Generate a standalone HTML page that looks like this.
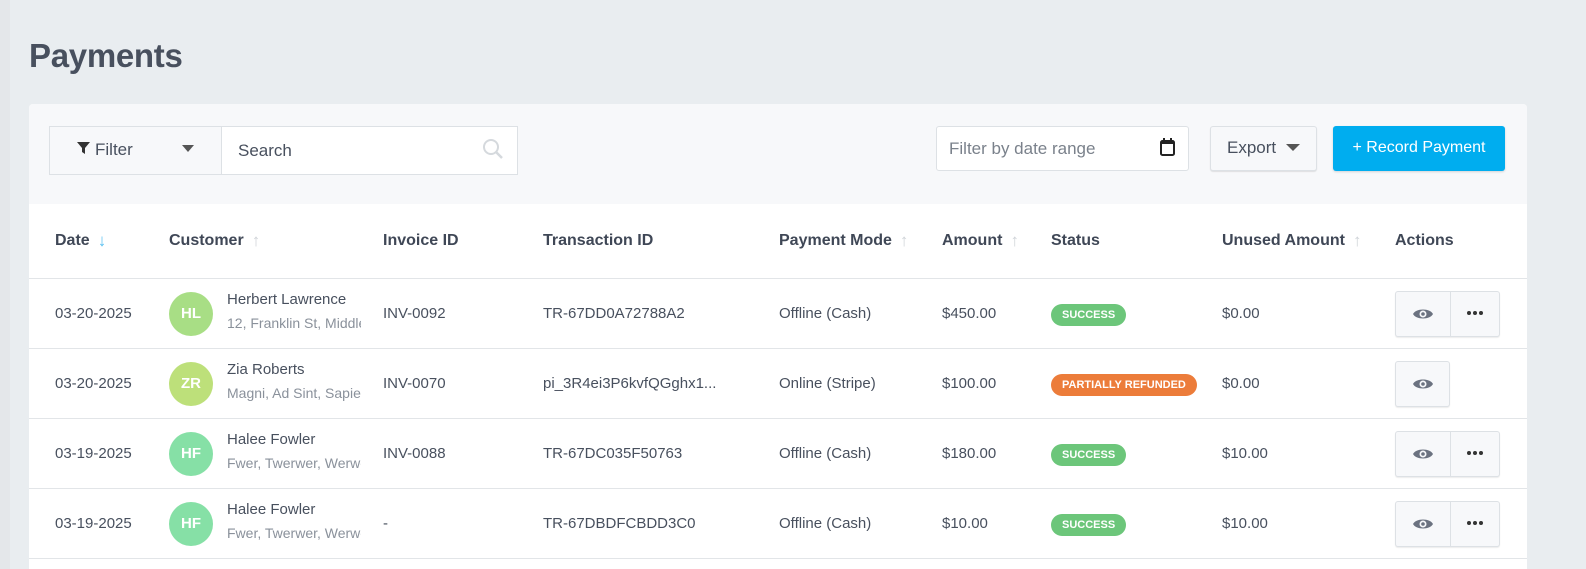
<!DOCTYPE html>
<html><head><meta charset="utf-8"><style>
*{box-sizing:border-box;margin:0;padding:0}
body{width:1586px;height:569px;overflow:hidden;background:#e9edf0;font-family:"Liberation Sans",sans-serif;color:#48505e;position:relative}
.ls{position:absolute;left:0;top:0;width:10px;height:569px;background:#e4e7ea}
h1{position:absolute;left:29px;top:37px;font-size:33px;font-weight:bold;color:#48505e;letter-spacing:-0.3px}
.card{position:absolute;left:29px;top:104px;width:1498px;height:465px;background:#fff;border-radius:4px 4px 0 0;overflow:hidden}
.tb{position:absolute;left:0;top:0;width:100%;height:100px;background:#f7f8fa}
.abs{position:absolute}
.box{position:absolute;background:#fff;border:1px solid #dde1e5}
.th{position:absolute;top:127px;font-size:16px;line-height:20px;height:20px;color:#3f4756;font-weight:bold;white-space:nowrap}
.arr{color:#cfd3d8;font-size:17px;line-height:20px;margin-left:8px;font-weight:normal;display:inline-block;vertical-align:top}
.row{position:absolute;left:0;width:100%;height:70px;border-top:1px solid #e2e5e8}
.c{position:absolute;top:26px;font-size:15px;color:#48505e;white-space:nowrap}
.av{position:absolute;left:140px;top:13px;width:44px;height:44px;border-radius:50%;color:#fff;font-weight:bold;font-size:15px;text-align:center;line-height:44px}
.nm{position:absolute;left:198px;top:12px;font-size:15px;color:#48505e}
.ad{position:absolute;left:198px;top:36px;font-size:14px;color:#8a919b;width:134px;overflow:hidden;white-space:nowrap}
.bd{position:absolute;top:25px;height:22px;border-radius:11px;color:#fff;font-size:11px;font-weight:bold;line-height:22px;padding:0 11px}
.ab{position:absolute;top:12px;height:46px;border:1px solid #dde1e5;border-radius:3px;background:#f7f8fa;box-shadow:0 1px 1px rgba(0,0,0,.08)}
.dots{position:absolute;left:71px;top:19px;width:18px;height:5px}
.dots i{position:absolute;top:0;width:4px;height:4px;border-radius:50%;background:#333}
</style></head><body>
<div class="ls"></div>
<h1>Payments</h1>
<div class="card">
 <div class="tb">
  <div class="box" style="left:20px;top:22px;width:469px;height:49px;"></div>
  <div class="abs" style="left:21px;top:23px;width:172px;height:47px;background:#f7f8fa;border-right:1px solid #dde1e5"></div>
  <svg class="abs" style="left:48px;top:38px" width="13" height="12" viewBox="0 0 13 12"><path d="M0 0h13L8 6v6L5 10V6Z" fill="#333"/></svg>
  <div class="abs" style="left:66px;top:36px;font-size:17px;color:#48505e">Filter</div>
  <div class="abs" style="left:153px;top:41px;width:0;height:0;border-left:6px solid transparent;border-right:6px solid transparent;border-top:7px solid #555"></div>
  <div class="abs" style="left:209px;top:37px;font-size:17px;color:#48505e">Search</div>
  <svg class="abs" style="left:453px;top:34px" width="22" height="22" viewBox="0 0 22 22"><circle cx="9" cy="9" r="7" fill="none" stroke="#d5d9dd" stroke-width="2"/><path d="M14 14l6 6" stroke="#d5d9dd" stroke-width="2.5"/></svg>
  <div class="box" style="left:907px;top:22px;width:253px;height:45px;border-radius:3px"></div>
  <div class="abs" style="left:920px;top:35px;font-size:17px;color:#7a818b">Filter by date range</div>
  <svg class="abs" style="left:1130px;top:33px" width="17" height="20" viewBox="0 0 17 20"><rect x="2" y="4" width="13" height="14" rx="1.5" fill="none" stroke="#222" stroke-width="2"/><rect x="2" y="4" width="13" height="3" fill="#222"/><path d="M5 1v4M12 1v4" stroke="#222" stroke-width="2"/></svg>
  <div class="box" style="left:1181px;top:22px;width:107px;height:45px;border-radius:3px;background:#f7f8fa;box-shadow:0 1px 1px rgba(0,0,0,.1)"></div>
  <div class="abs" style="left:1198px;top:34px;font-size:17px;color:#48505e">Export</div>
  <div class="abs" style="left:1257px;top:40px;width:0;height:0;border-left:7px solid transparent;border-right:7px solid transparent;border-top:7px solid #555"></div>
  <div class="abs" style="left:1304px;top:22px;width:172px;height:45px;background:#00adef;border-radius:3px;color:#fff;font-size:16px;text-align:center;line-height:44px;box-shadow:0 1px 2px rgba(0,0,0,.15)">+ Record Payment</div>
 </div>
 <div class="th" style="left:26px">Date<span class="arr" style="color:#5bc0f0;margin-left:8px">↓</span></div>
 <div class="th" style="left:140px">Customer<span class="arr">↑</span></div>
 <div class="th" style="left:354px">Invoice ID</div>
 <div class="th" style="left:514px">Transaction ID</div>
 <div class="th" style="left:750px">Payment Mode<span class="arr">↑</span></div>
 <div class="th" style="left:913px">Amount<span class="arr">↑</span></div>
 <div class="th" style="left:1022px">Status</div>
 <div class="th" style="left:1193px">Unused Amount<span class="arr">↑</span></div>
 <div class="th" style="left:1366px">Actions</div>

 <div class="row" style="top:174px">
  <div class="c" style="left:26px">03-20-2025</div>
  <div class="av" style="background:#a8de85">HL</div><div class="nm">Herbert Lawrence</div><div class="ad">12, Franklin St, Middle</div>
  <div class="c" style="left:354px">INV-0092</div><div class="c" style="left:514px">TR-67DD0A72788A2</div>
  <div class="c" style="left:750px">Offline (Cash)</div><div class="c" style="left:913px">$450.00</div>
  <div class="bd" style="left:1022px;background:#6cc67a">SUCCESS</div><div class="c" style="left:1193px">$0.00</div>
  <div class="ab" style="left:1366px;width:105px"><div style="position:absolute;left:54px;top:0;width:1px;height:44px;background:#dde1e5"></div><svg style="position:absolute;left:16px;top:13px" width="22" height="18" viewBox="0 0 22 18"><path d="M1 9C4 3 18 3 21 9C18 15 4 15 1 9Z" fill="#6b7280"/><circle cx="11" cy="9" r="3.5" fill="#f7f8fa"/><circle cx="11" cy="9" r="1.8" fill="#6b7280"/></svg><div class="dots"><i style="left:0"></i><i style="left:6px"></i><i style="left:12px"></i></div></div>
 </div>
 <div class="row" style="top:244px">
  <div class="c" style="left:26px">03-20-2025</div>
  <div class="av" style="background:#bde07a">ZR</div><div class="nm">Zia Roberts</div><div class="ad">Magni, Ad Sint, Sapiente</div>
  <div class="c" style="left:354px">INV-0070</div><div class="c" style="left:514px">pi_3R4ei3P6kvfQGghx1...</div>
  <div class="c" style="left:750px">Online (Stripe)</div><div class="c" style="left:913px">$100.00</div>
  <div class="bd" style="left:1022px;background:#ec7c3a">PARTIALLY REFUNDED</div><div class="c" style="left:1193px">$0.00</div>
  <div class="ab" style="left:1366px;width:55px"><svg style="position:absolute;left:16px;top:13px" width="22" height="18" viewBox="0 0 22 18"><path d="M1 9C4 3 18 3 21 9C18 15 4 15 1 9Z" fill="#6b7280"/><circle cx="11" cy="9" r="3.5" fill="#f7f8fa"/><circle cx="11" cy="9" r="1.8" fill="#6b7280"/></svg></div>
 </div>
 <div class="row" style="top:314px">
  <div class="c" style="left:26px">03-19-2025</div>
  <div class="av" style="background:#86e0a6">HF</div><div class="nm">Halee Fowler</div><div class="ad">Fwer, Twerwer, Werwer</div>
  <div class="c" style="left:354px">INV-0088</div><div class="c" style="left:514px">TR-67DC035F50763</div>
  <div class="c" style="left:750px">Offline (Cash)</div><div class="c" style="left:913px">$180.00</div>
  <div class="bd" style="left:1022px;background:#6cc67a">SUCCESS</div><div class="c" style="left:1193px">$10.00</div>
  <div class="ab" style="left:1366px;width:105px"><div style="position:absolute;left:54px;top:0;width:1px;height:44px;background:#dde1e5"></div><svg style="position:absolute;left:16px;top:13px" width="22" height="18" viewBox="0 0 22 18"><path d="M1 9C4 3 18 3 21 9C18 15 4 15 1 9Z" fill="#6b7280"/><circle cx="11" cy="9" r="3.5" fill="#f7f8fa"/><circle cx="11" cy="9" r="1.8" fill="#6b7280"/></svg><div class="dots"><i style="left:0"></i><i style="left:6px"></i><i style="left:12px"></i></div></div>
 </div>
 <div class="row" style="top:384px">
  <div class="c" style="left:26px">03-19-2025</div>
  <div class="av" style="background:#86e0a6">HF</div><div class="nm">Halee Fowler</div><div class="ad">Fwer, Twerwer, Werwer</div>
  <div class="c" style="left:354px">-</div><div class="c" style="left:514px">TR-67DBDFCBDD3C0</div>
  <div class="c" style="left:750px">Offline (Cash)</div><div class="c" style="left:913px">$10.00</div>
  <div class="bd" style="left:1022px;background:#6cc67a">SUCCESS</div><div class="c" style="left:1193px">$10.00</div>
  <div class="ab" style="left:1366px;width:105px"><div style="position:absolute;left:54px;top:0;width:1px;height:44px;background:#dde1e5"></div><svg style="position:absolute;left:16px;top:13px" width="22" height="18" viewBox="0 0 22 18"><path d="M1 9C4 3 18 3 21 9C18 15 4 15 1 9Z" fill="#6b7280"/><circle cx="11" cy="9" r="3.5" fill="#f7f8fa"/><circle cx="11" cy="9" r="1.8" fill="#6b7280"/></svg><div class="dots"><i style="left:0"></i><i style="left:6px"></i><i style="left:12px"></i></div></div>
 </div>
 <div class="row" style="top:454px;height:11px"></div>
</div>
</body></html>
